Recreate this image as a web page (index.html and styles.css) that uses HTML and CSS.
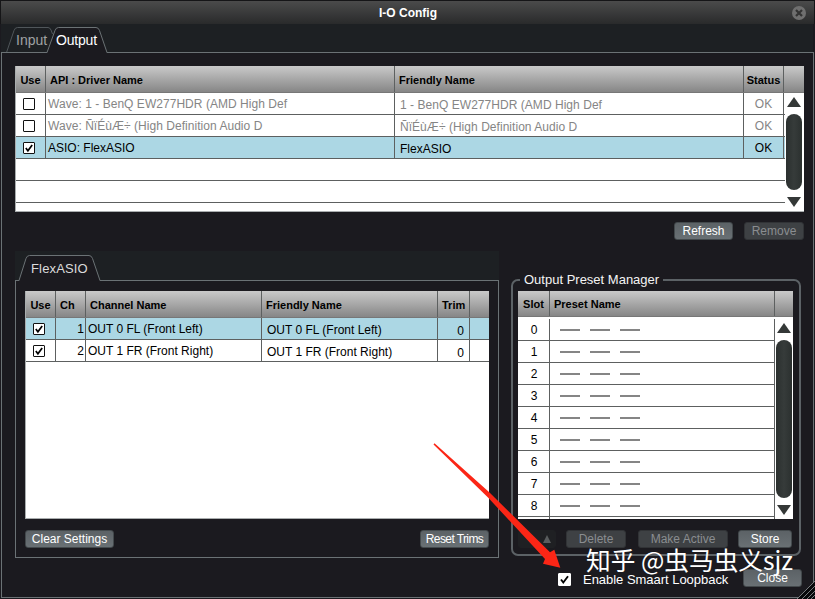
FILE: index.html
```html
<!DOCTYPE html>
<html lang="en">

<head>
    <meta charset="UTF-8">
    <meta name="viewport" content="width=device-width, initial-scale=1.0">
    <title>I-O Config</title>
    <link rel="stylesheet" href="styles.css">
</head>

<body>
    <div class="window">
        <header class="titlebar">
            <h1>I-O Config</h1>
            <svg class="close-icon" width="14" height="14" viewBox="0 0 14 14">
                <circle cx="7" cy="7" r="7" fill="#6f6f6f"/>
                <path d="M4 4L10 10M10 4L4 10" stroke="#333" stroke-width="2.2"/>
            </svg>
        </header>

        <nav class="tabs">
            <svg class="tab-shape" width="110" height="27" viewBox="0 0 110 27">
                <path d="M5.5 26.5L13 4.5Q14 1.500 16.500 1.500H47Q49 1.500 50 4L51.500 8" fill="none" stroke="#50565a"/>
                <path d="M46 27L54 4.500Q55 1.500 57.500 1.500H95Q97.500 1.500 98.500 4.500L106 27Z" fill="#1b1a1f"/>
                <path d="M0 26.500H46L54 4.500Q55 1.500 57.500 1.500H95Q97.500 1.500 98.500 4.500L106 26.500H110" fill="none" stroke="#6b7275"/>
            </svg>
            <span class="tab tab-input">Input</span>
            <span class="tab tab-output active">Output</span>
        </nav>

        <main class="panel">
            <!-- drivers -->
            <section class="table drivers">
                <div class="row head">
                    <span>Use</span><span class="name">API : Driver Name</span><span class="name">Friendly Name</span><span>Status</span><span></span>
                </div>
                <div class="body">
                    <div class="rows">
                        <div class="row disabled">
                            <span class="use"><i class="check"></i></span><span class="first">Wave: 1 - BenQ EW277HDR (AMD High Def</span><span class="friendly">1 - BenQ EW277HDR (AMD High Def</span><span class="status">OK</span>
                        </div>
                        <div class="row disabled">
                            <span class="use"><i class="check"></i></span><span class="first">Wave: ÑïÉùÆ÷ (High Definition Audio D</span><span class="friendly">ÑïÉùÆ÷ (High Definition Audio D</span><span class="status">OK</span>
                        </div>
                        <div class="row selected">
                            <span class="use"><i class="check"><svg viewBox="0 0 11 11"><path d="M2 5.500L4.300 8.500L9 2.300"/></svg></i></span><span class="first">ASIO: FlexASIO</span><span class="friendly">FlexASIO</span><span class="status">OK</span>
                        </div>
                        <div class="row empty"></div>
                        <div class="row empty"></div>
                    </div>
                    <div class="scrollbar">
                        <svg width="14" height="10" viewBox="0 0 14 10"><path d="M7 0L14 10H0Z"/></svg>
                        <div class="thumb"></div>
                        <svg width="14" height="10" viewBox="0 0 14 10"><path d="M0 0H14L7 10Z"/></svg>
                    </div>
                </div>
            </section>

            <div class="driver-buttons">
                <button class="btn refresh">Refresh</button>
                <button class="btn remove" disabled>Remove</button>
            </div>

            <div class="lower">
                <section class="device">
                    <div class="device-strip">
                        <svg width="90" height="30" viewBox="0 0 90 30">
                            <path d="M4 27L11 4.500Q12 1.500 14.500 1.500H74Q76.500 1.500 77.500 4.500L85 27V30H4Z" fill="#1b1a1f"/>
                            <path d="M0 26.500H4L11 4.500Q12 1.500 14.500 1.500H74Q76.500 1.500 77.500 4.500L85 26.500H90" fill="none" stroke="#6b7275"/>
                        </svg>
                        <span class="device-name">FlexASIO</span>
                    </div>
                    <div class="device-box">
                        <div class="table channels">
                            <div class="row head">
                                <span>Use</span><span class="ch-head">Ch</span><span class="name">Channel Name</span><span class="name">Friendly Name</span><span class="name">Trim</span><span></span>
                            </div>
                            <div class="row selected">
                                <span class="use"><i class="check"><svg viewBox="0 0 11 11"><path d="M2 5.500L4.300 8.500L9 2.300"/></svg></i></span><span class="ch">1</span><span class="first">OUT 0 FL (Front Left)</span><span class="friendly">OUT 0 FL (Front Left)</span><span class="trim">0</span><span></span>
                            </div>
                            <div class="row">
                                <span class="use"><i class="check"><svg viewBox="0 0 11 11"><path d="M2 5.500L4.300 8.500L9 2.300"/></svg></i></span><span class="ch">2</span><span class="first">OUT 1 FR (Front Right)</span><span class="friendly">OUT 1 FR (Front Right)</span><span class="trim">0</span><span></span>
                            </div>
                        </div>
                        <div class="device-buttons">
                            <button class="btn clear">Clear Settings</button>
                            <button class="btn reset">Reset Trims</button>
                        </div>
                    </div>
                </section>

                <section class="preset-side">
                    <div class="presets">
                        <h2><span>Output Preset Manager</span></h2>
                        <div class="table slots">
                            <div class="row head">
                                <span>Slot</span><span class="name">Preset Name</span><span></span>
                            </div>
                            <div class="body">
                                <div class="rows">
                                    <div class="row"><span class="slot">0</span><span class="dashes"><i></i><i></i><i></i></span></div>
                                    <div class="row"><span class="slot">1</span><span class="dashes"><i></i><i></i><i></i></span></div>
                                    <div class="row"><span class="slot">2</span><span class="dashes"><i></i><i></i><i></i></span></div>
                                    <div class="row"><span class="slot">3</span><span class="dashes"><i></i><i></i><i></i></span></div>
                                    <div class="row"><span class="slot">4</span><span class="dashes"><i></i><i></i><i></i></span></div>
                                    <div class="row"><span class="slot">5</span><span class="dashes"><i></i><i></i><i></i></span></div>
                                    <div class="row"><span class="slot">6</span><span class="dashes"><i></i><i></i><i></i></span></div>
                                    <div class="row"><span class="slot">7</span><span class="dashes"><i></i><i></i><i></i></span></div>
                                    <div class="row"><span class="slot">8</span><span class="dashes"><i></i><i></i><i></i></span></div>
                                    <div class="row"><span class="slot"></span><span></span></div>
                                </div>
                                <div class="scrollbar">
                                    <svg width="14" height="10" viewBox="0 0 14 10"><path d="M7 0L14 10H0Z"/></svg>
                                    <div class="thumb"></div>
                                    <svg width="14" height="10" viewBox="0 0 14 10"><path d="M0 0H14L7 10Z"/></svg>
                                </div>
                            </div>
                        </div>
                        <div class="preset-buttons">
                            <button class="btn move" disabled>
                                <svg width="8" height="8" viewBox="0 0 8 8"><path d="M4 0L8 8H0Z" fill="#595c5e"/></svg>
                            </button>
                            <button class="btn delete" disabled>Delete</button>
                            <button class="btn activate" disabled>Make Active</button>
                            <button class="btn store">Store</button>
                        </div>
                    </div>
                    <footer class="footer">
                        <label class="loopback">
                            <i class="check"><svg viewBox="0 0 11 11"><path d="M2 5.500L4.300 8.500L9 2.300"/></svg></i>
                            <span>Enable Smaart Loopback</span>
                        </label>
                        <button class="btn close">Close</button>
                    </footer>
                </section>
            </div>
        </main>

        <!-- resize grip -->
        <svg class="grip" width="18" height="18" viewBox="0 0 18 18">
            <path d="M0 18L18 0V18Z" fill="#08080a"/>
            <path d="M0 18L18 0M5 18L18 5M10 18L18 10M14 18L18 14" stroke="#85898b" stroke-width="0.9"/>
        </svg>

        <svg class="arrow" width="130" height="128" viewBox="0 0 130 128">
            <path d="M1.500 0.300L56 49L117 109.300L121.300 106.700L127.300 124.700L110 120.700L112 116L55 54.500L0.500 1.500Z" fill="#fb2616"/>
        </svg>

        <span class="watermark">知乎 @虫马虫义sjz</span>
    </div>
</body>

</html>
```
FILE: styles.css
```css
* {
    box-sizing: border-box;
}
body {
    margin: 0;
    background-color: #1b1a1f;
    color: #000;
    font-family: "Liberation Sans", Arial, sans-serif;
    font-size: 12px;
}
.window {
    position: relative;
    width: 815px;
    height: 599px;
    overflow: hidden;
    display: flex;
    flex-direction: column;
}

/* title bar */
.titlebar {
    height: 24px;
    display: flex;
    align-items: center;
    border: 1px solid #151517;
    border-bottom: none;
    background: linear-gradient(#4b4b4b, #292a2b);
    padding-right: 8px;
}
.titlebar h1 {
    flex: 1;
    margin: 0;
    padding-left: 23px;
    color: #fff;
    font-size: 12px;
    line-height: 22px;
    text-align: center;
}

/* tabs */
.tabs {
    display: flex;
    height: 28px;
    margin: 0 2px 0 1px;
    padding-top: 2px;
    background: #1d2023;
    font-size: 14px;
}
.tab-shape {
    flex: none;
    height: 27px;
    margin-right: -110px;
    z-index: 1;
}
.tab {
    z-index: 2;
    line-height: 29px;
    color: #a0a2a4;
}
.tab-input {
    box-sizing: content-box;
    width: 40px;
    padding-left: 15px;
}
.tab-output {
    color: #fff;
    letter-spacing: -0.2px;
}

.panel {
    flex: 1;
    margin: 0 1px 1px;
    padding: 13px 9px 0 13px;
    border: 1px solid #6b7275;
    min-height: 0;
}

/* tables */
.table {
    background: #fff;
    border: 1px solid #a9adae;
    border-width: 0 0 1px 1px;
    display: flex;
    flex-direction: column;
    overflow: hidden;
}
.row {
    display: grid;
    grid-template-rows: 100%;
    height: 22px;
    flex: none;
    border-bottom: 1px solid #5d6060;
    line-height: 23px;
    white-space: nowrap;
}
.row > span {
    border-right: 1px solid #5d6060;
}
.row > span:last-child {
    border-right: none;
}
.head {
    height: 27px;
    background: linear-gradient(#c9c9c9, #868686);
    border-bottom-color: #777;
    font-size: 11px;
    font-weight: bold;
    line-height: 28px;
    text-align: center;
}
.head .name {
    padding-left: 4px;
    text-align: left;
}
.selected {
    background: #acd7e4;
}
.disabled {
    color: #858585;
    letter-spacing: 0.04px;
}
.first {
    padding-left: 2px;
}
.friendly {
    padding-left: 5px;
    line-height: 25px;
}
.status {
    text-align: center;
}
.body {
    flex: 1;
    display: flex;
    min-height: 0;
}
.use {
    display: flex;
    justify-content: center;
    align-items: center;
    padding-right: 3px;
}
.check {
    display: block;
    width: 12px;
    height: 12px;
    border: 1px solid #111;
    border-radius: 1px;
    background: #fff;
}
.check svg {
    display: block;
    width: 100%;
    height: 100%;
    fill: none;
    stroke: #000;
    stroke-width: 1.9;
}

.drivers {
    height: 146px;
}
.drivers .head {
    grid-template-columns: 30px 349px 349px 40px 1fr;
}
.drivers .rows {
    width: 769px;
}
.drivers .rows .row {
    grid-template-columns: 30px 349px 349px 40px 1fr;
}
.drivers .status:last-child {
    border-right: 1px solid #5d6060;
}

.scrollbar {
    flex: 1;
    display: flex;
    flex-direction: column;
    align-items: center;
    padding: 4px 2px 4px 0;
    gap: 7px;
    fill: #343837;
}
.scrollbar svg {
    flex: none;
}
.thumb {
    flex: 1;
    width: 16px;
    border-radius: 8px;
    background: linear-gradient(90deg, #2b302f, #363b3a 50%, #2b302f);
}

/* buttons */
.btn {
    height: 18px;
    padding: 0;
    border: 1px solid #43494c;
    border-radius: 3px;
    background: linear-gradient(#5c6266, #697074);
    color: #fff;
    font-family: inherit;
    font-size: 12px;
    line-height: 17px;
    white-space: nowrap;
}
.btn:disabled {
    border-color: #313336;
    background: #3e4144;
    color: #8a8d90;
}
.driver-buttons {
    display: flex;
    justify-content: flex-end;
    gap: 11px;
    margin-top: 10px;
}
.refresh {
    width: 59px;
}
.remove {
    width: 60px;
}

.lower {
    display: flex;
    justify-content: space-between;
    margin-top: 11px;
}

/* device channels */
.device {
    width: 484px;
}
.device-strip {
    display: flex;
    height: 29px;
    padding-top: 3px;
    background: #1d2023;
}
.device-strip svg {
    flex: none;
    height: 30px;
    margin-right: -90px;
}
.device-name {
    z-index: 1;
    padding-left: 16px;
    color: #dcdcdc;
    font-size: 13px;
    letter-spacing: 0.15px;
    line-height: 29px;
}
.device-box {
    height: 278px;
    padding: 10px 9px 0;
    border: 1px solid #6b7275;
}
.channels {
    height: 228px;
}
.channels .row {
    grid-template-columns: 30px 30px 176px 176px 32px 1fr;
}
.channels .ch-head {
    padding-left: 4px;
    text-align: left;
}
.ch {
    padding-right: 1px;
    text-align: right;
}
.trim {
    padding-right: 5px;
    line-height: 27px;
    text-align: right;
}
.device-buttons {
    display: flex;
    justify-content: space-between;
    margin-top: 11px;
}
.clear {
    width: 89px;
}
.reset {
    width: 69px;
    letter-spacing: -0.6px;
}

/* presets */
.preset-side {
    width: 293px;
    padding-top: 28px;
}
.presets {
    width: 290px;
    height: 277px;
    padding: 0 5px;
    border: 2px solid #5c6266;
    border-radius: 7px;
}
.presets h2 {
    position: relative;
    z-index: 1;
    height: 10px;
    margin: 0;
    padding-left: 2px;
    color: #f4f4f4;
    font-size: 13px;
    font-weight: normal;
    line-height: 14px;
}
.presets h2 span {
    display: block;
    position: relative;
    top: -8px;
    width: 143px;
    padding: 0 4px;
    background: #1b1a1f;
    white-space: nowrap;
}
.slots {
    width: 275px;
    height: 228px;
    border: none;
}
.slots .head {
    height: 26px;
    grid-template-columns: 32px 225px 1fr;
    line-height: 27px;
}
.slots .rows {
    width: 257px;
    padding-top: 2px;
}
.slots .rows .row {
    grid-template-columns: 32px 225px;
}
.slots .rows .row > span {
    border-right: 1px solid #5d6060;
}
.slots .scrollbar {
    padding: 6px 0 4px;
}
.slot {
    padding-left: 1px;
    text-align: center;
}
.dashes {
    display: flex;
    align-items: center;
    gap: 10px;
    padding-left: 10px;
}
.dashes i {
    width: 20px;
    height: 2px;
    background: #858585;
}
.preset-buttons {
    display: flex;
    margin-top: 11px;
}
.preset-buttons .btn {
    flex: none;
}
.move {
    width: 38px;
    padding-left: 20px;
}
.move:disabled {
    background: #1f2023;
    border-color: #1f2023;
}
.delete {
    width: 60px;
    margin-left: 10px;
}
.activate {
    width: 90px;
    margin-left: 12px;
}
.store {
    width: 54px;
    margin-left: 10px;
}

.footer {
    display: flex;
    justify-content: space-between;
    padding: 13px 2px 0 47px;
}
.loopback {
    display: flex;
    align-items: center;
    gap: 12px;
    height: 16px;
    margin-top: 2px;
    color: #fff;
    font-size: 13px;
    letter-spacing: -0.03px;
}
.loopback .check {
    width: 13px;
    height: 13px;
    border-color: #fff;
}
.close {
    width: 59px;
}

/* overlays */
.grip {
    position: absolute;
    right: 0;
    bottom: 0;
}
.arrow {
    position: absolute;
    left: 433px;
    top: 443px;
}
.watermark {
    position: absolute;
    left: 586px;
    top: 542px;
    color: #fff;
    font-family: "Noto Sans CJK SC", sans-serif;
    font-size: 24.7px;
    line-height: 34px;
    white-space: nowrap;
}
```
